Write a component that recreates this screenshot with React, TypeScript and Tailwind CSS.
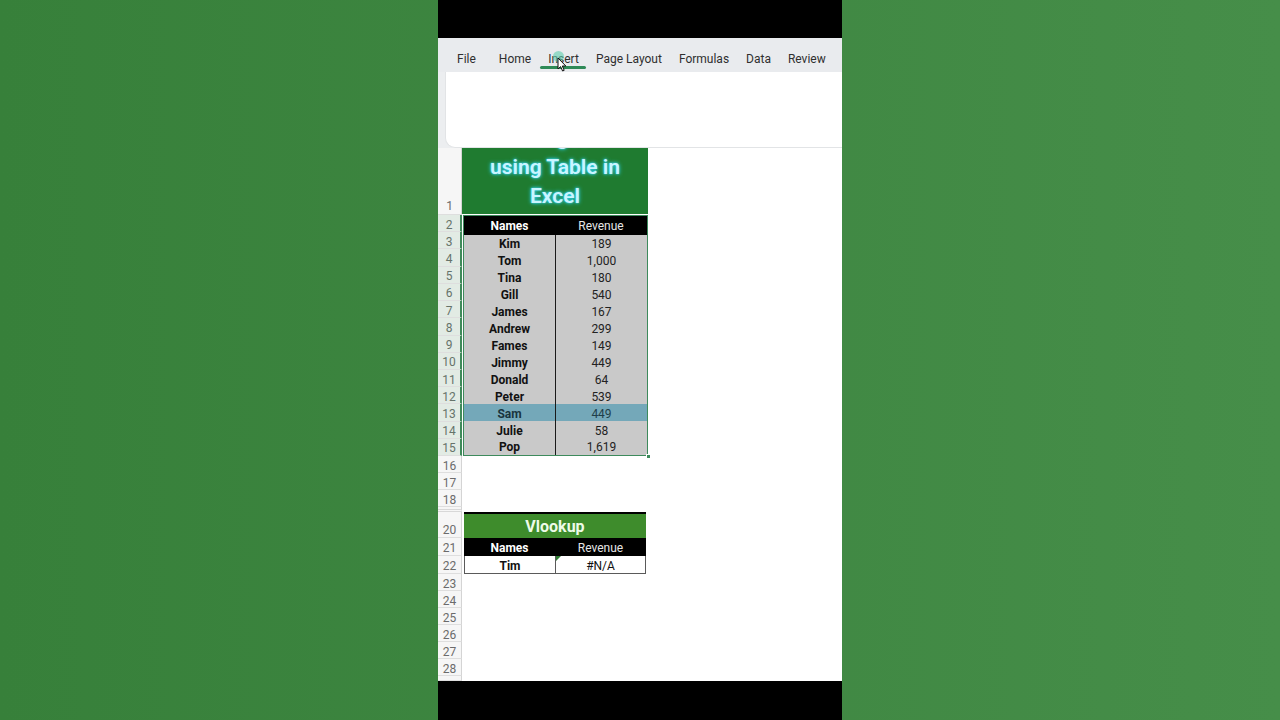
import React from "react";

const people: [string, string][] = [
  ["Kim", "189"],
  ["Tom", "1,000"],
  ["Tina", "180"],
  ["Gill", "540"],
  ["James", "167"],
  ["Andrew", "299"],
  ["Fames", "149"],
  ["Jimmy", "449"],
  ["Donald", "64"],
  ["Peter", "539"],
  ["Sam", "449"],
  ["Julie", "58"],
  ["Pop", "1,619"],
];

const tabs = ["File", "Home", "Insert", "Page Layout", "Formulas", "Data", "Review"];

function RowHead({ n, sel, className = "" }: { n?: number; sel?: boolean; className?: string }) {
  return (
    <div
      className={
        "w-[24px] shrink-0 min-h-0 flex justify-center border-b border-[#dedede] text-[12px] leading-none " +
        (sel
          ? "bg-[#e2ebe4] text-[#66736a] border-r-2 border-r-[#3f8a5a] "
          : "bg-[#f6f6f6] text-[#6b6b6b] border-r border-r-[#d4d4d4] ") +
        className
      }
    >
      {n}
    </div>
  );
}

function Cursor() {
  return (
    <div className="absolute left-[116px] top-[14px] pointer-events-none">
      <div className="absolute left-[-1px] top-[-1px] w-[11px] h-[11px] rounded-full bg-[#5fcfae]/60" />
      <svg width="10" height="15" viewBox="0 0 10 15" className="absolute left-[3px] top-[5px]">
        <path d="M1 1 L1 12 L3.6 9.6 L5.6 14 L7.2 13.3 L5.3 9 L8.8 9 Z" fill="#fff" stroke="#111" strokeWidth="1" strokeLinejoin="round" />
      </svg>
    </div>
  );
}

export default function App() {
  return (
    <div className="w-[1280px] h-[720px] flex justify-center bg-gradient-to-r from-[#37803a] to-[#468e49] font-['Roboto',_'Noto_Sans',_sans-serif]">
      <div className="w-[404px] h-full flex flex-col bg-black">
        <div className="h-[38px] shrink-0" />

        {/* ribbon tabs */}
        <div className="relative h-[34px] shrink-0 bg-[#e9ebee] flex items-center pt-[8px] pl-[19px] gap-[17px] text-[12px] text-[#2f2f2f] overflow-hidden whitespace-nowrap">
          {tabs.map((t, i) => (
            <div key={t} className={"relative " + (i === 0 ? "mr-[6px]" : "")}>
              {t}
              {t === "Insert" && (
                <div className="absolute left-[-8px] right-[-7px] top-[16px] h-[3px] rounded-full bg-[#2e8a57]" />
              )}
            </div>
          ))}
          <div className="text-[#bbb]">T</div>
          <Cursor />
        </div>

        {/* ribbon panel */}
        <div className="h-[76px] shrink-0 bg-[#eceef0] pl-[7px]">
          <div className="h-full bg-white rounded-bl-[10px] border-l border-b border-[#e2e4e6]" />
        </div>

        {/* sheet */}
        <div className="flex-1 bg-white flex flex-col overflow-hidden">
          {/* row 1 */}
          <div className="flex h-[67px] shrink-0">
            <RowHead n={1} className="items-end pb-[2px]" />
            <div className="w-[186px] mb-[1px] bg-[#1f7b30] overflow-hidden flex flex-col items-center justify-end pb-[3px] text-[21px] font-semibold leading-[29px] text-[#c9f5ff] [text-shadow:0_0_4px_#32d8ff,0_0_2px_#32d8ff]">
              <div>Ranges</div>
              <div>using Table in</div>
              <div>Excel</div>
            </div>
          </div>

          {/* rows 2-15 */}
          <div className="flex h-[241px] shrink-0">
            <div className="flex flex-col">
              {Array.from({ length: 14 }, (_, i) => (
                <RowHead key={i} n={i + 2} sel className="flex-1 items-center pt-[3px]" />
              ))}
            </div>
            <div className="relative ml-[1px] w-[185px] border-[1.5px] border-[#3d8a5c] flex flex-col text-[12px] leading-none">
              <div className="flex-1 min-h-0 flex bg-black text-white items-center pt-[2px]">
                <div className="w-[91px] text-center font-bold">Names</div>
                <div className="flex-1 text-center text-[#e6e6e6]">Revenue</div>
              </div>
              {people.map(([name, rev]) => {
                const hi = name === "Sam";
                return (
                  <div key={name} className={"flex-1 min-h-0 flex items-stretch " + (hi ? "bg-[#74a8b9] text-[#19343d]" : "bg-[#c9c9c9] text-[#111]")}>
                    <div className="w-[91px] flex items-center justify-center pt-[2px] font-bold">{name}</div>
                    <div className={"flex-1 flex items-center justify-center pt-[2px] border-l border-[#1a1a1a] " + (hi ? "text-[#1f3f49]" : "text-[#222]")}>{rev}</div>
                  </div>
                );
              })}
              <div className="absolute right-[-4px] bottom-[-4px] w-[5px] h-[5px] bg-[#3d8a5c] border border-white" />
            </div>
          </div>

          {/* rows 16-18 */}
          {[16, 17, 18].map((n) => (
            <div key={n} className="flex h-[17.15px] shrink-0">
              <RowHead n={n} className="items-center pt-[3px]" />
            </div>
          ))}

          {/* hidden row 19 */}
          <div className="flex h-[5px] shrink-0">
            <RowHead className="border-b-[3px] border-b-[#d8d8d8] border-double" />
          </div>

          {/* row 20 */}
          <div className="flex h-[26px] shrink-0">
            <RowHead n={20} className="items-end pb-[1px]" />
            <div className="ml-[2px] w-[182px] bg-[#3e8c2c] border-t-2 border-black flex items-center justify-center pt-[1px] text-[16px] font-bold text-[#eefbe9]">
              Vlookup
            </div>
          </div>

          {/* row 21 */}
          <div className="flex h-[18px] shrink-0">
            <RowHead n={21} className="items-center pt-[3px]" />
            <div className="ml-[2px] w-[182px] bg-black text-white flex items-center pt-[2px] text-[12px] leading-none">
              <div className="w-[91px] text-center font-bold">Names</div>
              <div className="flex-1 text-center text-[#e6e6e6]">Revenue</div>
            </div>
          </div>

          {/* row 22 */}
          <div className="flex h-[18px] shrink-0">
            <RowHead n={22} className="items-center pt-[3px]" />
            <div className="ml-[2px] w-[182px] flex items-stretch text-[12px] leading-none border border-t-0 border-[#5a5a5a] text-[#111]">
              <div className="w-[90px] flex items-center justify-center pt-[2px] font-bold">Tim</div>
              <div className="relative flex-1 flex items-center justify-center pt-[2px] border-l border-[#5a5a5a]">
                <div className="absolute left-0 top-0 w-0 h-0 border-t-[5px] border-t-[#2e7d32] border-r-[5px] border-r-transparent" />
                #N/A
              </div>
            </div>
          </div>

          {/* rows 23-28 */}
          {[23, 24, 25, 26, 27, 28].map((n) => (
            <div key={n} className="flex h-[17px] shrink-0">
              <RowHead n={n} className="items-center pt-[3px]" />
            </div>
          ))}
          <div className="flex h-[6px] shrink-0 border-b border-[#dcdcdc]">
            <RowHead />
          </div>
        </div>

        <div className="h-[39px] shrink-0" />
      </div>
    </div>
  );
}
